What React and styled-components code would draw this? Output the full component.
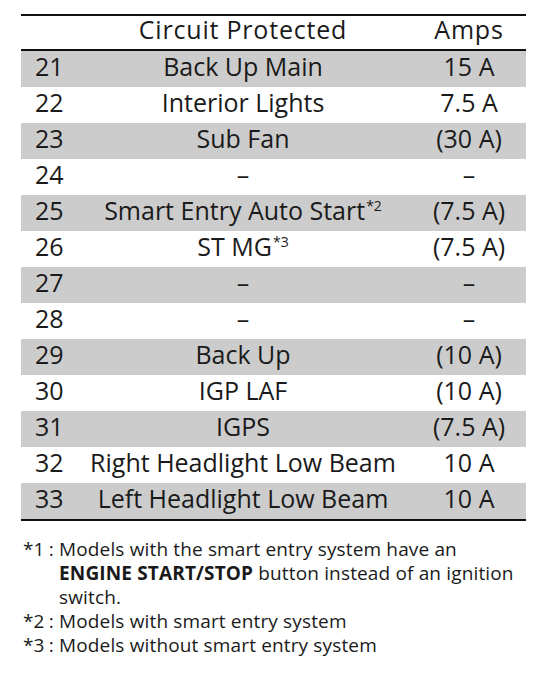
import React from "react";
import styled, { createGlobalStyle } from "styled-components";

const GlobalStyle = createGlobalStyle`
  html, body {
    margin: 0;
    padding: 0;
    background: #ffffff;
  }
  body {
    font-family: "Open Sans", "Noto Sans", "DejaVu Sans", sans-serif;
    color: #1a1a1a;
  }
`;

const Page = styled.div`
  width: 505px;
  padding: 14px 0 0 21px;
`;

const Table = styled.div`
  border-top: 2px solid #111;
  border-bottom: 2px solid #111;
`;

const Row = styled.div`
  display: grid;
  grid-template-columns: 53px 338px 114px;
  height: ${(p) => (p.$header ? "33px" : "36px")};
  background: ${(p) => (p.$shaded ? "#cccccc" : "#ffffff")};
  border-bottom: ${(p) => (p.$header ? "2px solid #111" : "none")};
  font-size: 25px;
  line-height: ${(p) => (p.$header ? "26px" : "30px")};
  letter-spacing: ${(p) => (p.$header ? "0.8px" : "0")};
`;

const Cell = styled.div`
  white-space: nowrap;
  text-align: ${(p) => p.$align || "center"};
  padding-left: ${(p) => (p.$align === "left" ? "14px" : "0")};
`;

const Sup = styled.sup`
  font-size: 14px;
  line-height: 0;
  vertical-align: 9px;
  margin-left: 1px;
`;

const Notes = styled.div`
  margin-top: 15.5px;
  display: flex;
  flex-direction: column;
  font-size: 19px;
  line-height: 24px;
  letter-spacing: 0.15px;
`;

const Note = styled.div`
  display: grid;
  grid-template-columns: 38px 1fr;
`;

const NoteLabel = styled.div`
  display: flex;
  padding-left: 2px;
`;

const Colon = styled.span`
  margin-left: 4px;
`;

const NoteText = styled.div``;

const Strong = styled.strong`
  display: inline-block;
  font-weight: 700;
  line-height: 24px;
`;

const rows = [
  ["21", "Back Up Main", null, "15 A"],
  ["22", "Interior Lights", null, "7.5 A"],
  ["23", "Sub Fan", null, "(30 A)"],
  ["24", "–", null, "–"],
  ["25", "Smart Entry Auto Start", "*2", "(7.5 A)"],
  ["26", "ST MG", "*3", "(7.5 A)"],
  ["27", "–", null, "–"],
  ["28", "–", null, "–"],
  ["29", "Back Up", null, "(10 A)"],
  ["30", "IGP LAF", null, "(10 A)"],
  ["31", "IGPS", null, "(7.5 A)"],
  ["32", "Right Headlight Low Beam", null, "10 A"],
  ["33", "Left Headlight Low Beam", null, "10 A"],
];

export default function App() {
  return (
    <>
      <GlobalStyle />
      <Page>
        <Table>
          <Row $header>
            <Cell />
            <Cell>Circuit Protected</Cell>
            <Cell>Amps</Cell>
          </Row>
          {rows.map(([num, circuit, sup, amps], i) => (
            <Row key={num} $shaded={i % 2 === 0}>
              <Cell $align="left">{num}</Cell>
              <Cell>
                {circuit}
                {sup && <Sup>{sup}</Sup>}
              </Cell>
              <Cell>{amps}</Cell>
            </Row>
          ))}
        </Table>
        <Notes>
          <Note>
            <NoteLabel>
              <span>*1</span>
              <Colon>:</Colon>
            </NoteLabel>
            <NoteText>
              Models with the smart entry system have an <Strong>ENGINE START/STOP</Strong> button instead of an ignition switch.
            </NoteText>
          </Note>
          <Note>
            <NoteLabel>
              <span>*2</span>
              <Colon>:</Colon>
            </NoteLabel>
            <NoteText>Models with smart entry system</NoteText>
          </Note>
          <Note>
            <NoteLabel>
              <span>*3</span>
              <Colon>:</Colon>
            </NoteLabel>
            <NoteText>Models without smart entry system</NoteText>
          </Note>
        </Notes>
      </Page>
    </>
  );
}
